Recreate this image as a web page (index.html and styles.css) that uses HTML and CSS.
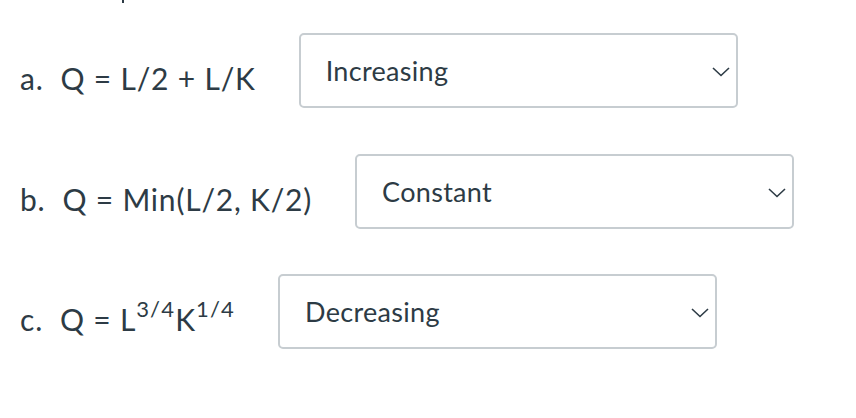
FILE: index.html
```html
<!DOCTYPE html>
<html>
<head>
<meta charset="utf-8">
<link rel="stylesheet" href="styles.css">
</head>
<body>
<div class="page">
  <div class="cut"></div>
  <div class="row">
    <div class="label">a.&nbsp; Q = L/2 + L/K</div>
    <div class="select"><span class="value">Increasing</span><svg class="chev" width="18" height="10" viewBox="0 0 18 10"><path d="M1 1 L9 8.5 L17 1" fill="none" stroke="#2d3b45" stroke-width="1.6"/></svg></div>
  </div>
  <div class="row">
    <div class="label">b.&nbsp; Q = Min(L/2, K/2)</div>
    <div class="select"><span class="value">Constant</span><svg class="chev" width="18" height="10" viewBox="0 0 18 10"><path d="M1 1 L9 8.5 L17 1" fill="none" stroke="#2d3b45" stroke-width="1.6"/></svg></div>
  </div>
  <div class="row row-last">
    <div class="label">c.&nbsp; Q = L<sup>3/4</sup>K<sup>1/4</sup></div>
    <div class="select"><span class="value">Decreasing</span><svg class="chev" width="18" height="10" viewBox="0 0 18 10"><path d="M1 1 L9 8.5 L17 1" fill="none" stroke="#2d3b45" stroke-width="1.6"/></svg></div>
  </div>
</div>
</body>
</html>
```
FILE: styles.css
```css
html, body {
  margin: 0;
  padding: 0;
  background: #ffffff;
}
body {
  font-family: Lato, "Liberation Sans", sans-serif;
  color: #2d3b45;
}
.page {
  padding: 0 20px;
}
.cut {
  width: 2px;
  height: 3px;
  background: #2d3b45;
  margin-left: 102px;
  margin-bottom: 30px;
}
.row {
  display: flex;
  align-items: flex-start;
  height: 75px;
  margin-bottom: 46px;
}
.row-last {
  margin-top: -1px;
}
.label {
  font-size: 30px;
  letter-spacing: 0.8px;
  line-height: 34px;
  margin-top: 28px;
  margin-right: 43px;
  white-space: nowrap;
}
.label sup {
  font-size: 22px;
  letter-spacing: 1.2px;
  line-height: 0;
  vertical-align: 0;
  position: relative;
  top: -14px;
}
.select {
  box-sizing: border-box;
  width: 439px;
  height: 75px;
  border: 2px solid #c7cdd1;
  border-radius: 5px;
  display: flex;
  align-items: center;
  justify-content: space-between;
  padding: 0 6px 0 25px;
  background: #fff;
}
.value {
  font-size: 27px;
  letter-spacing: 0.3px;
  line-height: 30px;
}
.chev {
  display: block;
  margin-top: 2px;
}
```
